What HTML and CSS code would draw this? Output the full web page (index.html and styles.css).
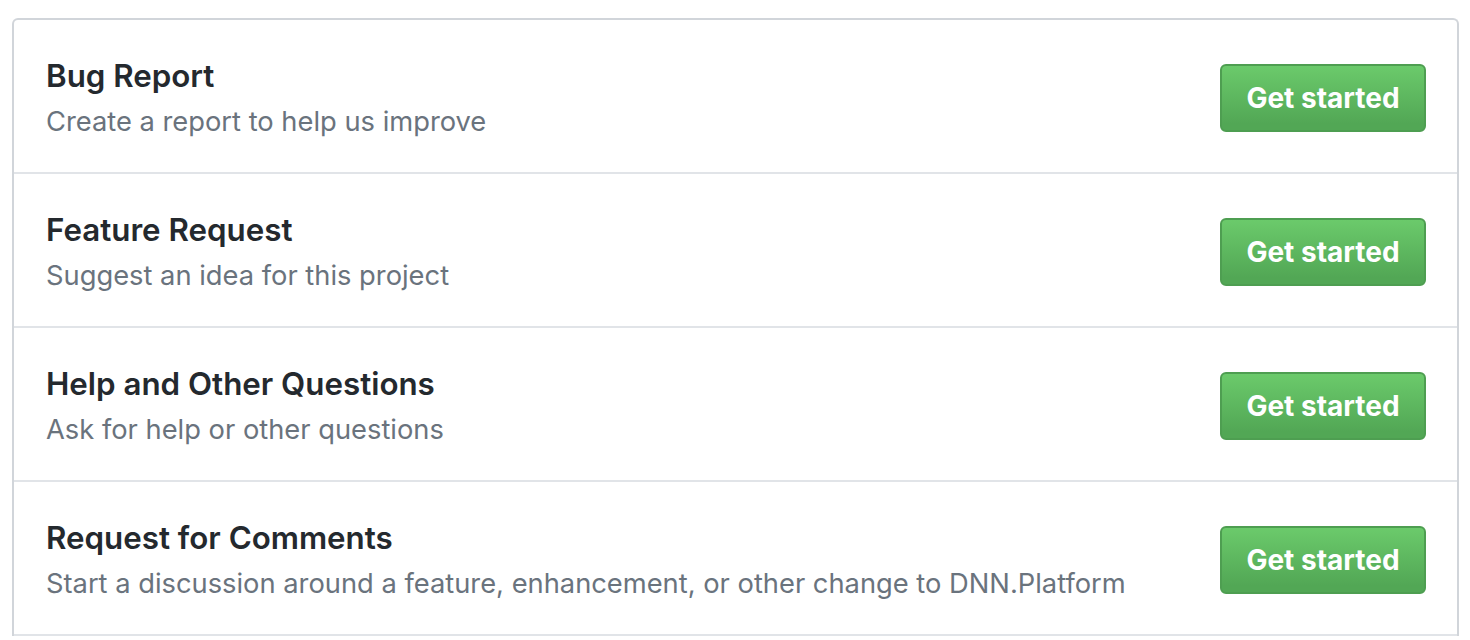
FILE: index.html
```html
<!DOCTYPE html>
<html lang="en">
<head>
<meta charset="utf-8">
<title>Issue templates</title>
<link rel="stylesheet" href="styles.css">
</head>
<body>
<div class="box">
  <div class="row">
    <div class="info">
      <div class="title">Bug Report</div>
      <div class="desc">Create a report to help us improve</div>
    </div>
    <a class="btn" href="#">Get started</a>
  </div>
  <div class="row">
    <div class="info">
      <div class="title">Feature Request</div>
      <div class="desc">Suggest an idea for this project</div>
    </div>
    <a class="btn" href="#">Get started</a>
  </div>
  <div class="row">
    <div class="info">
      <div class="title">Help and Other Questions</div>
      <div class="desc">Ask for help or other questions</div>
    </div>
    <a class="btn" href="#">Get started</a>
  </div>
  <div class="row">
    <div class="info">
      <div class="title">Request for Comments</div>
      <div class="desc">Start a discussion around a feature, enhancement, or other change to DNN.Platform</div>
    </div>
    <a class="btn" href="#">Get started</a>
  </div>
</div>
</body>
</html>
```
FILE: styles.css
```css
html, body {
  margin: 0;
  padding: 0;
  background: #ffffff;
}
body {
  font-family: Inter, "Noto Sans", "Liberation Sans", sans-serif;
  color: #24292e;
  padding: 18px 11px 0 12px;
}
.box {
  border: 2px solid #d1d5da;
  border-bottom: none;
  border-radius: 6px 6px 0 0;
}
.row {
  display: flex;
  align-items: center;
  justify-content: space-between;
  padding: 32px 31px 32px 32px;
  border-bottom: 2px solid #e1e4e8;
}
.title {
  font-size: 31.3px;
  line-height: 48px;
  font-weight: 600;
  color: #24292e;
}
.desc {
  font-size: 27.3px;
  line-height: 37px;
  margin-top: 3px;
  color: #6a737d;
}
.btn {
  display: block;
  box-sizing: border-box;
  width: 206px;
  height: 68px;
  line-height: 64px;
  text-align: center;
  border: 2px solid #4e9e51;
  border-radius: 6px;
  background-image: linear-gradient(180deg, #6bca6b 0%, #52a755 90%);
  color: #ffffff;
  font-size: 28px;
  font-weight: 700;
  text-decoration: none;
  margin-top: 4px;
}
```
